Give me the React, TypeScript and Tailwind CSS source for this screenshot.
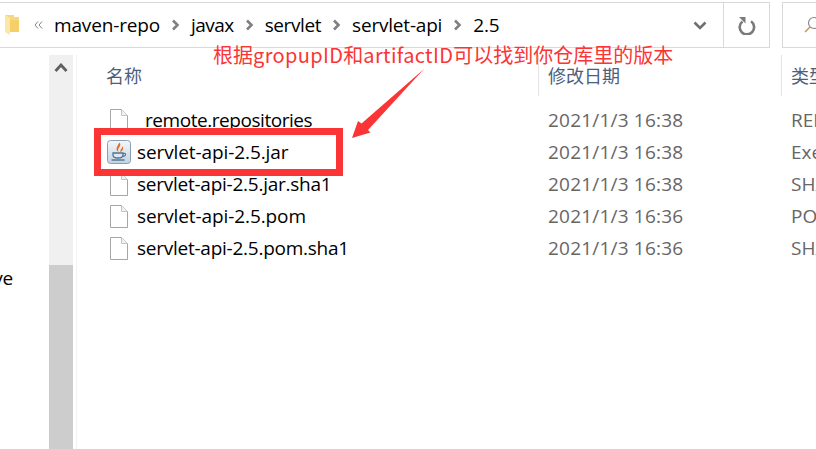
import React from 'react';

const ui = '"Open Sans", "Noto Sans CJK SC", sans-serif';

const files = [
  { name: 'remote.repositories', date: '2021/1/3 16:38', type: 'REPOSITORIES File', indent: true, track: 'tracking-[-0.45px]' },
  { name: 'servlet-api-2.5.jar', date: '2021/1/3 16:38', type: 'Executable Jar File', jar: true, track: 'tracking-[-0.1px]' },
  { name: 'servlet-api-2.5.jar.sha1', date: '2021/1/3 16:38', type: 'SHA1 File', track: 'tracking-[-0.25px]' },
  { name: 'servlet-api-2.5.pom', date: '2021/1/3 16:36', type: 'POM File', track: 'tracking-[-0.1px]' },
  { name: 'servlet-api-2.5.pom.sha1', date: '2021/1/3 16:36', type: 'SHA1 File', track: 'tracking-[-0.25px]' },
];

const crumbs = [
  { label: 'maven-repo', track: 'tracking-[-0.15px]' },
  { label: 'javax', track: 'tracking-[-0.55px]' },
  { label: 'servlet', track: 'tracking-[-0.4px]' },
  { label: 'servlet-api', track: 'tracking-[-0.2px]' },
];

const Crumb = () => (
  <svg width="9" height="12" viewBox="0 0 9 12" className="mx-[11px] shrink-0">
    <path d="M2 1.5 L6.5 6 L2 10.5" fill="none" stroke="#808080" strokeWidth="2.6" />
  </svg>
);

const FileIcon = () => (
  <svg width="18" height="23" viewBox="0 0 18 23" className="shrink-0 ml-[33px]">
    <path d="M0.5 0.5 H11.5 L17.5 6.5 V22.5 H0.5 Z" fill="#fff" stroke="#a6a6a6" />
    <path d="M11.5 0.5 V6.5 H17.5" fill="#f2f2f2" stroke="#c4c4c4" />
  </svg>
);

const JarIcon = () => (
  <svg width="24" height="24" viewBox="0 0 24 24" className="shrink-0 ml-[30px]">
    <defs>
      <linearGradient id="jarBg" x1="0" y1="0" x2="0" y2="1">
        <stop offset="0" stopColor="#f4f7fa" />
        <stop offset="1" stopColor="#c3d3e2" />
      </linearGradient>
    </defs>
    <rect x="0.5" y="0.5" width="23" height="23" rx="3" fill="url(#jarBg)" stroke="#8b9fb3" />
    <path d="M12.5 2.5 C15.5 6 9.5 8 11.5 12 C7.5 9.5 10.5 6 12.5 2.5 Z" fill="#e8691f" />
    <path d="M15 6 C16 8.5 12.5 9.5 13.5 12 C16 10.5 17 8 15 6 Z" fill="#e8691f" />
    <path d="M6 13 H16 V15 C16 17 14 18 11 18 C8 18 6 17 6 15 Z" fill="#dfe8f0" stroke="#4f7392" strokeWidth="1.3" />
    <path d="M16 13.5 C19.5 12.5 19.5 16 15.5 16.5" fill="none" stroke="#4f7392" strokeWidth="1.1" />
    <path d="M4.5 20 H17.5" stroke="#4f7392" strokeWidth="1.4" />
  </svg>
);

const App = () => {
  return (
    <div className="relative w-[816px] h-[449px] overflow-hidden bg-white" style={{ fontFamily: ui }}>
      {/* address bar */}
      <div className="pt-[2px] flex">
        <div className="w-[770px] h-[46px] flex items-center border-y border-r border-[#d9d9d9] shrink-0">
          <svg width="15" height="22" viewBox="0 0 15 22" className="ml-[5px] shrink-0">
            <path d="M0 1 H9 V3 H14 V18 H0 Z" fill="#f7d87c" />
            <path d="M0 1 L5 4 V21 L0 18 Z" fill="#fbe7a6" />
            <path d="M5 6 H14 V18 H5 Z" fill="#f5cf68" />
          </svg>
          <svg width="9" height="8" viewBox="0 0 9 8" className="ml-[14px] shrink-0">
            <path d="M4 0.5 L1 4 L4 7.5 M8 0.5 L5 4 L8 7.5" fill="none" stroke="#808080" strokeWidth="1" />
          </svg>
          <div className="ml-[11px] flex items-center text-[19px] text-black whitespace-nowrap">
            {crumbs.map((c) => (
              <React.Fragment key={c.label}>
                <span className={c.track}>{c.label}</span>
                <Crumb />
              </React.Fragment>
            ))}
            <span className="tracking-[-0.15px]">2.5</span>
          </div>
          <svg width="14" height="9" viewBox="0 0 14 9" className="ml-auto mr-[16px] shrink-0">
            <path d="M1.5 1.5 L7 7 L12.5 1.5" fill="none" stroke="#707070" strokeWidth="2.6" />
          </svg>
          <div className="w-[46px] h-full flex items-center justify-center border-l border-[#d9d9d9] shrink-0">
            <svg width="18" height="19" viewBox="0 0 18 19">
              <path d="M4.5 4.5 A7.2 7.2 0 1 0 13 4.3" fill="none" stroke="#7a7a7a" strokeWidth="2.6" transform="translate(0 1)" />
              <path d="M1 1 H7.5 V7.5 Z" fill="#7a7a7a" />
            </svg>
          </div>
        </div>
        <div className="ml-[12px] flex-1 h-[46px] flex items-center pl-[21px] border-y border-l border-[#d9d9d9] overflow-hidden">
          <svg width="16" height="18" viewBox="0 0 16 18" className="shrink-0">
            <circle cx="10" cy="7" r="5.5" fill="none" stroke="#8a8a8a" strokeWidth="1.2" />
            <path d="M6 11 L1 16" stroke="#c8905a" strokeWidth="1.4" />
          </svg>
        </div>
      </div>

      {/* body */}
      <div className="flex h-[401px] pt-[7px]">
        <div className="w-[49px] shrink-0 overflow-hidden pt-[211px] flex justify-end">
          <span className="text-[19px] leading-[24px] text-black pr-[36px] tracking-[-0.15px]">ve</span>
        </div>

        {/* scrollbar */}
        <div className="w-[24px] shrink-0 flex flex-col bg-[#f0f0f0]">
          <div className="h-[210px] pt-[8px] flex justify-center">
            <svg width="14" height="9" viewBox="0 0 14 9">
              <path d="M1.5 8 L7 2 L12.5 8" fill="none" stroke="#606060" strokeWidth="2.8" />
            </svg>
          </div>
          <div className="flex-1 bg-[#cdcdcd]" />
        </div>
        <div className="w-[4px] shrink-0 border-r border-[#f2f2f2]" />

        {/* file list */}
        <div className="flex-1 min-w-0 overflow-hidden">
          <div className="h-[41px] flex items-stretch text-[18px] leading-[22px] text-[#4c607a]" style={{ fontFamily: '"Noto Sans CJK SC", sans-serif' }}>
            <div className="w-[461px] shrink-0 pl-[29px] flex items-center pb-[2px]">名称</div>
            <div className="w-[243px] shrink-0 pl-[9px] flex items-center pb-[2px] border-l border-[#e5e5e5]">修改日期</div>
            <div className="flex-1 pl-[9px] flex items-center pb-[2px] border-l border-[#e5e5e5] whitespace-nowrap">类型</div>
          </div>
          <div className="pt-[8px]">
            {files.map((f) => (
              <div key={f.name} className="h-[32px] flex items-center whitespace-nowrap text-[19px]">
                <div className="w-[461px] shrink-0 flex items-center">
                  <div className="w-[60px] shrink-0 flex items-center">
                    {f.jar ? <JarIcon /> : <FileIcon />}
                  </div>
                  <span className={`text-black ${f.track} ${f.indent ? 'pl-[8px]' : ''}`}>{f.name}</span>
                </div>
                <div className="w-[243px] shrink-0 pl-[10px] text-[#666666] tracking-[0.2px]">{f.date}</div>
                <div className="flex-1 pl-[10px] text-[#666666]">{f.type}</div>
              </div>
            ))}
          </div>
        </div>
      </div>

      {/* red annotations on top of the screenshot */}
      <div
        className="absolute left-[213px] top-[47px] text-[20px] leading-[16px] text-[#fb3535] whitespace-nowrap"
        style={{ fontFamily: '"Noto Sans CJK SC", sans-serif' }}
      >
        根据<span className="tracking-[0.35px]">gropupID</span>和<span className="tracking-[0.35px]">artifactID</span>可以找到你仓库里的版本
      </div>
      <div className="absolute left-[94px] top-[128px] w-[249px] h-[48px] border-[7px] border-[#fb3535]" />
      <svg className="absolute left-[345px] top-[62px]" width="85" height="82" viewBox="345 62 85 82">
        <path d="M424 69 L368 130 L370.5 132.5 L352 138 L358 121 L361.5 123.5 Z" fill="#fb3535" />
      </svg>
    </div>
  );
};

export default App;
